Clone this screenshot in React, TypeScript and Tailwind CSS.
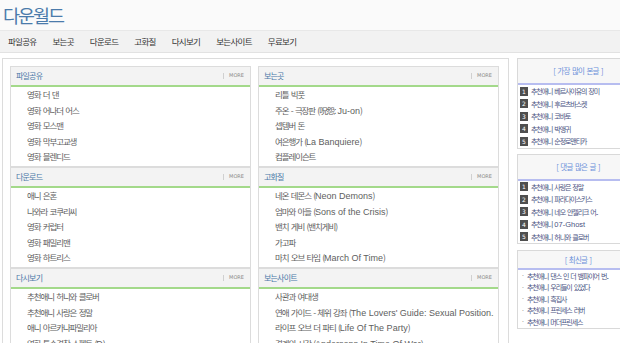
import React from "react";

type Box = { title: string; items: string[] };

const leftBoxes: Box[] = [
  { title: "파일공유", items: ["영화 더 댄", "영화 어나더 어스", "영화 모스맨", "영화 막부고교생", "영화 블렌디드"] },
  { title: "다운로드", items: ["애니 은혼", "나와라 코쿠리씨", "영화 커럽터", "영화 패밀리맨", "영화 하트리스"] },
  { title: "다시보기", items: ["추천애니 허니와 클로버", "추천애니 사랑은 정말", "애니 아르카나파밀리아", "영화 특수경찰 스펙트 (D)", "영화 레드 라이딩 후드"] },
];

const rightBoxes: Box[] = [
  { title: "보는곳", items: ["리틀 빅풋", "주온 - 극장판 (呪怨: Ju-on)", "셉템버 돈", "여은행가 (La Banquiere)", "컴플레이슨트"] },
  { title: "고화질", items: ["네온 데몬스 (Neon Demons)", "엄마와 아들 (Sons of the Crisis)", "밴치 게비 (밴치게비)", "가고파", "마치 오브 타임 (March Of Time)"] },
  { title: "보는사이트", items: ["사관과 여대생", "연애 가이드 - 체위 강좌 (The Lovers' Guide: Sexual Position..", "라이프 오브 더 파티 (Life Of The Party)", "경계의 시간 (Andersons In Time Of War)", "서약"] },
];

const navItems = ["파일공유", "보는곳", "다운로드", "고화질", "다시보기", "보는사이트", "무료보기"];

const popular = ["추천애니 베르사이유의 장미", "추천애니 후르츠바스켓", "추천애니 코바토", "추천애니 박앵귀", "추천애니 순정로맨티카"];
const commented = ["추천애니 사랑은 정말", "추천애니 파라다이스키스", "추천애니 네오 안젤리크 어..", "추천애니 07-Ghost", "추천애니 허니와 클로버"];
const latest = ["추천애니 댄스 인 더 뱀파이어 번..", "추천애니 우리들이 있었다", "추천애니 흑집사", "추천애니 프린세스 러버", "추천애니 머더프린세스"];

// latin runs get their own font and normal spacing, hangul stays squeezed
function Mixed({ s, latin }: { s: string; latin: string }) {
  const parts = s.split(/([A-Za-z0-9][A-Za-z0-9 '.:\-]*)/);
  return (
    <>
      {parts.map((p, i) =>
        i % 2 ? (
          <span key={i} className={latin}>
            {p}
          </span>
        ) : (
          <React.Fragment key={i}>{p}</React.Fragment>
        )
      )}
    </>
  );
}

function ListBox({ box }: { box: Box }) {
  return (
    <div className="border border-[#dcdcdc] bg-white">
      <div className="h-[18px] bg-[#f3f3f3] border-b-2 border-[#a3d98a] box-content flex items-center justify-between pl-[5px] pr-[6px]">
        <span className="text-[8px] tracking-[-0.8px] text-[#4a78a8]">{box.title}</span>
        <span className="flex items-center gap-[5px]">
          <span className="w-px h-[6px] bg-[#d0d0d0]" />
          <span className="text-[5px] text-[#8a8a8a] font-['DejaVu_Sans',sans-serif]">MORE</span>
        </span>
      </div>
      <ul className="h-[79px] pl-[16px] pr-[4px]">
        {box.items.map((it) => (
          <li
            key={it}
            className="h-[15.5px] leading-[15.5px] text-[8.5px] tracking-[-1.1px] [word-spacing:1.5px] text-[#5e5e5e] whitespace-nowrap overflow-hidden"
          >
            <Mixed s={it} latin="tracking-normal [word-spacing:0px] text-[9px] font-['Liberation_Sans',sans-serif]" />
          </li>
        ))}
      </ul>
    </div>
  );
}

function SideBox({
  title,
  items,
  kind,
  head,
  row,
}: {
  title: string;
  items: string[];
  kind: "num" | "dot";
  head: string;
  row: string;
}) {
  return (
    <div className="border border-[#d9d9d9] bg-white">
      <div className={`${head} bg-[#f7f7f7] border-b-2 border-[#b7bdf0] box-content flex items-center justify-center`}>
        <span className="text-[7.5px] tracking-[-0.8px] [word-spacing:1.5px] text-[#6a8fd9]">{title}</span>
      </div>
      <ul className="pl-[2px]">
        {items.map((it, i) => (
          <li key={it} className={`${row} flex items-center gap-[3px] whitespace-nowrap overflow-hidden`}>
            {kind === "num" ? (
              <span className="w-[8px] h-[9px] shrink-0 bg-[#4f4f4f] text-white text-[6px] leading-[9px] text-center font-['DejaVu_Sans',sans-serif]">
                {i + 1}
              </span>
            ) : (
              <span className="w-[4px] shrink-0 text-[7px] text-[#9a9a9a] leading-none pl-[1px]">·</span>
            )}
            <span className="text-[7px] tracking-[-1.1px] [word-spacing:1.5px] text-[#4b5382]">
              <Mixed s={it} latin="tracking-normal [word-spacing:0px] text-[7.5px] font-['Liberation_Sans',sans-serif]" />
            </span>
          </li>
        ))}
      </ul>
    </div>
  );
}

export default function App() {
  return (
    <div className="w-[620px] h-[343px] overflow-hidden bg-white font-['Noto_Sans_CJK_KR',sans-serif]">
      <div className="w-[650px]">
        <header className="h-[31px] bg-[#fafafa] border-b border-[#e8e8e8] flex items-center pl-[3px]">
          <h1 className="text-[18.5px] tracking-[-2px] text-[#4b7bab] leading-none">다운월드</h1>
        </header>
        <nav className="h-[22px] bg-[#f2f2f2] border-b border-[#e2e2e2] flex items-center pl-[8px] gap-[16px]">
          {navItems.map((n) => (
            <span key={n} className="text-[8.5px] tracking-[-0.7px] text-[#333]">
              {n}
            </span>
          ))}
        </nav>

        <div className="flex items-start pl-[2px] mt-[5px]">
          <main className="w-[507px] h-[300px] border border-[#dcdcdc] pt-[7px] pl-[7px] pr-[9px] grid grid-cols-2 gap-x-[7px] content-start">
            <div className="flex flex-col">
              {leftBoxes.map((b) => (
                <ListBox key={b.title} box={b} />
              ))}
            </div>
            <div className="flex flex-col">
              {rightBoxes.map((b) => (
                <ListBox key={b.title} box={b} />
              ))}
            </div>
          </main>

          <aside className="ml-[8px] w-[122px] flex flex-col">
            <SideBox title="[ 가장 많이 본글 ]" items={popular} kind="num" head="h-[24px]" row="h-[12.5px]" />
            <div className="mt-[5px]">
              <SideBox title="[ 댓글 많은 글 ]" items={commented} kind="num" head="h-[24px]" row="h-[12.5px]" />
            </div>
            <div className="mt-[6px]">
              <SideBox title="[ 최신글 ]" items={latest} kind="dot" head="h-[17px]" row="h-[11.5px]" />
            </div>
          </aside>
        </div>
      </div>
    </div>
  );
}
